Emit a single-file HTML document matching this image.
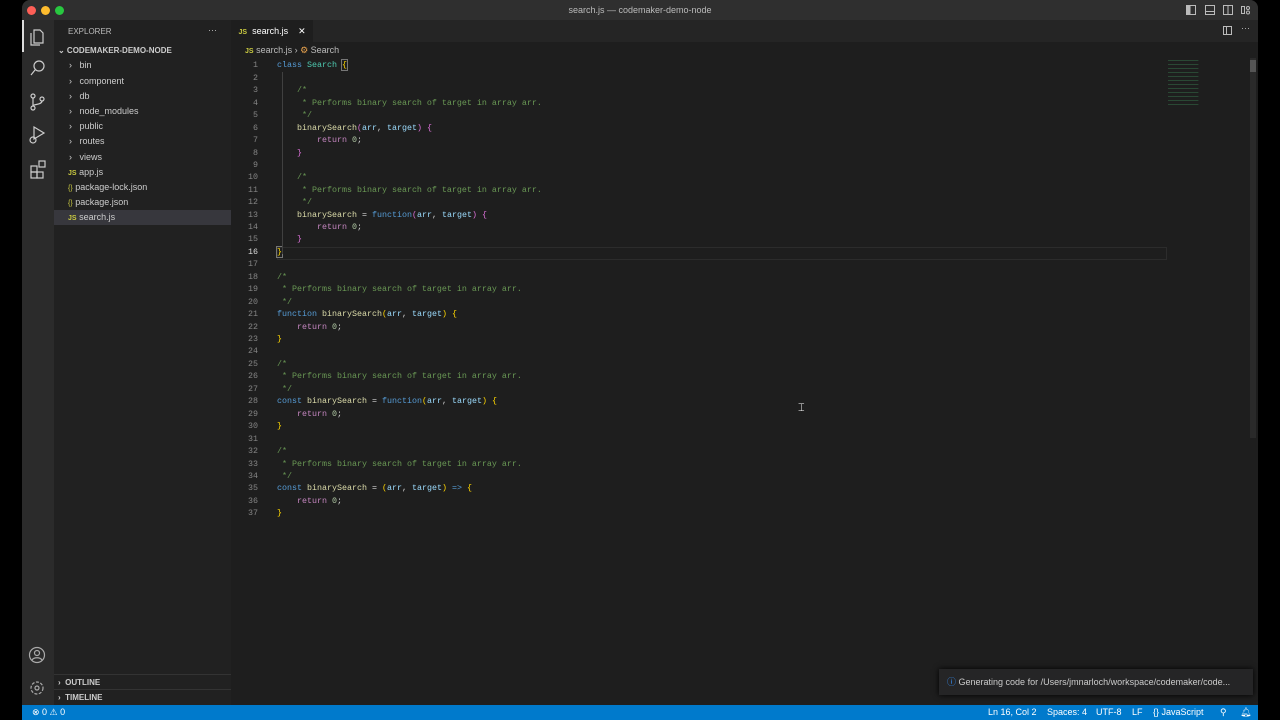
<!DOCTYPE html>
<html><head><meta charset="utf-8"><style>
*{margin:0;padding:0;box-sizing:border-box}
body{width:1280px;height:720px;background:#000;position:relative;overflow:hidden;font-family:"Liberation Sans",sans-serif;color:#ccc}
.win{position:absolute;left:22px;top:0;width:1236px;height:720px;background:#1e1e1e;border-radius:8px 8px 0 0;overflow:hidden}
.title{position:absolute;left:0;top:0;width:100%;height:20px;background:#2f2f2f;font-size:9px;color:#bbb;text-align:center;line-height:20px}
.dot{position:absolute;top:6px;width:9px;height:9px;border-radius:50%}
.act{position:absolute;left:0;top:20px;width:32px;height:685px;background:#2b2b2b}
.side{position:absolute;left:32px;top:20px;width:177px;height:685px;background:#212121}
.side .it{position:absolute;font-size:9px;color:#ccc;height:15px;line-height:15px}
.tabs{position:absolute;left:209px;top:20px;right:0;height:22px;background:#252525}
.tab{position:absolute;left:0;top:0;width:82px;height:22px;background:#1e1e1e;font-size:9px;line-height:22px;color:#fff}
.code{position:absolute;left:0;top:2px;font-family:"Liberation Mono",monospace;font-size:8.33px;white-space:pre}
.ln{position:absolute;width:30px;text-align:right;left:228px;color:#858585}
.c{position:absolute;left:277px;color:#d4d4d4}
.k{color:#569cd6}.t{color:#4ec9b0}.f{color:#dcdcaa}.p{color:#9cdcfe}.cm{color:#6a9955}.r{color:#c586c0}.n{color:#b5cea8}.y{color:#ffd700}.v{color:#da70d6}
.status{position:absolute;left:0;top:705px;width:100%;height:15px;background:#007acc;font-size:9px;color:#fff;line-height:15px}
.js{color:#cbcb41;font-size:7px;font-weight:bold}
</style></head><body>
<div class="win">
<div class="title">search.js — codemaker-demo-node
<div class="dot" style="left:5px;background:#fe5f57"></div><div class="dot" style="left:19px;background:#febc2e"></div><div class="dot" style="left:33px;background:#28c840"></div>
<svg style="position:absolute;left:1164px;top:5px" width="66" height="11" fill="none" stroke="#bbb" stroke-width="1"><rect x="0.5" y="0.5" width="9" height="9"/><rect x="1" y="1" width="3" height="8" fill="#bbb"/><rect x="19.5" y="0.5" width="9" height="9"/><line x1="20" y1="6.5" x2="28" y2="6.5"/><rect x="37.5" y="0.5" width="9" height="9"/><line x1="42" y1="1" x2="42" y2="9"/><rect x="55.5" y="1.5" width="3" height="7"/><circle cx="62" cy="3" r="1.5"/><circle cx="62" cy="7.5" r="1.5"/></svg>
</div>
<div class="act">
<div style="position:absolute;left:0;top:0;width:2px;height:32px;background:#ddd"></div>
<svg width="32" height="180" fill="none" stroke="#ccc" stroke-width="1.2" style="position:absolute;top:0;left:0">
<path d="M12 10h6l3 3v10h-9z M9 13v12h9"/>
<circle cx="17" cy="46" r="5"/><path d="M13 50l-4 5"/>
<circle cx="11" cy="76" r="2"/><circle cx="11" cy="88" r="2"/><circle cx="20" cy="79" r="2"/><path d="M11 78v8 M20 81c0 4-9 3-9 5"/>
<path d="M12 107l10 6-10 6z"/><circle cx="11" cy="120" r="3"/>
<rect x="9" y="146" width="6" height="6"/><rect x="9" y="152" width="6" height="6"/><rect x="15" y="152" width="6" height="6"/><rect x="17" y="141" width="6" height="6"/>
</svg>
<svg width="32" height="60" fill="none" stroke="#aaa" stroke-width="1.2" style="position:absolute;top:620px;left:0"><circle cx="15" cy="15" r="7.5"/><circle cx="15" cy="13" r="2.5"/><path d="M10 20c2-3 8-3 10 0"/><circle cx="15" cy="48" r="6" stroke-dasharray="3 1.5"/><circle cx="15" cy="48" r="2"/></svg>
</div>
<div class="side">
<div class="it" style="left:14px;top:4px;font-size:8px;color:#bbb">EXPLORER</div>
<div class="it" style="left:154px;top:3px;color:#bbb">···</div>
<div class="it" style="left:4px;top:23px;font-size:8px;font-weight:bold">⌄ CODEMAKER-DEMO-NODE</div>
<div class="it" style="left:15px;top:38px">›&nbsp;&nbsp; bin</div>
<div class="it" style="left:15px;top:54px">›&nbsp;&nbsp; component</div>
<div class="it" style="left:15px;top:69px">›&nbsp;&nbsp; db</div>
<div class="it" style="left:15px;top:84px">›&nbsp;&nbsp; node_modules</div>
<div class="it" style="left:15px;top:99px">›&nbsp;&nbsp; public</div>
<div class="it" style="left:15px;top:114px">›&nbsp;&nbsp; routes</div>
<div class="it" style="left:15px;top:130px">›&nbsp;&nbsp; views</div>
<div class="it" style="left:14px;top:145px"><span class="js">JS</span> app.js</div>
<div class="it" style="left:14px;top:160px"><span style="color:#cbcb41;font-size:7px">{}</span> package-lock.json</div>
<div class="it" style="left:14px;top:175px"><span style="color:#cbcb41;font-size:7px">{}</span> package.json</div>
<div class="it" style="left:0;top:190px;width:177px;background:#37373d;padding-left:14px"><span class="js">JS</span> search.js</div>
<div style="position:absolute;left:0;top:654px;width:177px;border-top:1px solid #333"></div>
<div class="it" style="left:4px;top:655px;font-size:8px;font-weight:bold">›&nbsp; OUTLINE</div>
<div style="position:absolute;left:0;top:669px;width:177px;border-top:1px solid #333"></div>
<div class="it" style="left:4px;top:670px;font-size:8px;font-weight:bold">›&nbsp; TIMELINE</div>
</div>
<div class="tabs"><div class="tab">&nbsp;&nbsp;&nbsp;<span class="js">JS</span>&nbsp; search.js&nbsp;&nbsp;&nbsp; ✕</div>
<div style="position:absolute;right:26px;top:6px;width:9px;height:9px;border:1px solid #bbb"></div><div style="position:absolute;right:31px;top:6px;height:9px;border-left:1px solid #bbb"></div>
<div style="position:absolute;right:8px;top:3px;font-size:9px;color:#bbb">···</div></div>
<div style="position:absolute;left:223px;top:45px;font-size:9px;color:#bbb"><span class="js">JS</span> search.js › <span style="color:#e8a24d">⚙</span> Search</div>
</div>
<div style="position:absolute;left:1168px;top:58px;width:38px;height:50px;opacity:.3;background:repeating-linear-gradient(#1e1e1e 0 2px,#4a6 2px 3px,#1e1e1e 3px 4px);clip-path:polygon(0 0,80% 0,80% 100%,0 100%)"></div>
<div style="position:absolute;left:1250px;top:58px;width:6px;height:380px;background:#2a2a2a"></div>
<div style="position:absolute;left:1250px;top:60px;width:6px;height:12px;background:#555"></div>
<div style="position:absolute;left:277px;top:247px;width:890px;height:13px;border:1px solid #2c2c2c"></div>
<div class="code">
<div class="ln" style="top:58px">1</div><div class="c" style="top:58px"><span class="k">class</span> <span class="t">Search</span> <span class="y" style="outline:1px solid #777">{</span></div>
<div class="ln" style="top:71px">2</div>
<div class="ln" style="top:83px">3</div><div class="c cm" style="top:83px">    /*</div>
<div class="ln" style="top:96px">4</div><div class="c cm" style="top:96px">     * Performs binary search of target in array arr.</div>
<div class="ln" style="top:108px">5</div><div class="c cm" style="top:108px">     */</div>
<div class="ln" style="top:121px">6</div><div class="c" style="top:121px">    <span class="f">binarySearch</span><span class="v">(</span><span class="p">arr</span>, <span class="p">target</span><span class="v">)</span> <span class="v">{</span></div>
<div class="ln" style="top:133px">7</div><div class="c" style="top:133px">        <span class="r">return</span> <span class="n">0</span>;</div>
<div class="ln" style="top:146px">8</div><div class="c" style="top:146px">    <span class="v">}</span></div>
<div class="ln" style="top:158px">9</div>
<div class="ln" style="top:170px">10</div><div class="c cm" style="top:170px">    /*</div>
<div class="ln" style="top:183px">11</div><div class="c cm" style="top:183px">     * Performs binary search of target in array arr.</div>
<div class="ln" style="top:195px">12</div><div class="c cm" style="top:195px">     */</div>
<div class="ln" style="top:208px">13</div><div class="c" style="top:208px">    <span class="f">binarySearch</span> = <span class="k">function</span><span class="v">(</span><span class="p">arr</span>, <span class="p">target</span><span class="v">)</span> <span class="v">{</span></div>
<div class="ln" style="top:220px">14</div><div class="c" style="top:220px">        <span class="r">return</span> <span class="n">0</span>;</div>
<div class="ln" style="top:232px">15</div><div class="c" style="top:232px">    <span class="v">}</span></div>
<div class="ln" style="top:245px;color:#ddd">16</div><div class="c" style="top:245px"><span class="y" style="outline:1px solid #777">}</span></div>
<div class="ln" style="top:257px">17</div>
<div class="ln" style="top:270px">18</div><div class="c cm" style="top:270px">/*</div>
<div class="ln" style="top:282px">19</div><div class="c cm" style="top:282px"> * Performs binary search of target in array arr.</div>
<div class="ln" style="top:295px">20</div><div class="c cm" style="top:295px"> */</div>
<div class="ln" style="top:307px">21</div><div class="c" style="top:307px"><span class="k">function</span> <span class="f">binarySearch</span><span class="y">(</span><span class="p">arr</span>, <span class="p">target</span><span class="y">)</span> <span class="y">{</span></div>
<div class="ln" style="top:320px">22</div><div class="c" style="top:320px">    <span class="r">return</span> <span class="n">0</span>;</div>
<div class="ln" style="top:332px">23</div><div class="c" style="top:332px"><span class="y">}</span></div>
<div class="ln" style="top:344px">24</div>
<div class="ln" style="top:357px">25</div><div class="c cm" style="top:357px">/*</div>
<div class="ln" style="top:369px">26</div><div class="c cm" style="top:369px"> * Performs binary search of target in array arr.</div>
<div class="ln" style="top:382px">27</div><div class="c cm" style="top:382px"> */</div>
<div class="ln" style="top:394px">28</div><div class="c" style="top:394px"><span class="k">const</span> <span class="f">binarySearch</span> = <span class="k">function</span><span class="y">(</span><span class="p">arr</span>, <span class="p">target</span><span class="y">)</span> <span class="y">{</span></div>
<div class="ln" style="top:407px">29</div><div class="c" style="top:407px">    <span class="r">return</span> <span class="n">0</span>;</div>
<div class="ln" style="top:419px">30</div><div class="c" style="top:419px"><span class="y">}</span></div>
<div class="ln" style="top:432px">31</div>
<div class="ln" style="top:444px">32</div><div class="c cm" style="top:444px">/*</div>
<div class="ln" style="top:457px">33</div><div class="c cm" style="top:457px"> * Performs binary search of target in array arr.</div>
<div class="ln" style="top:469px">34</div><div class="c cm" style="top:469px"> */</div>
<div class="ln" style="top:481px">35</div><div class="c" style="top:481px"><span class="k">const</span> <span class="f">binarySearch</span> = <span class="y">(</span><span class="p">arr</span>, <span class="p">target</span><span class="y">)</span> <span class="k">=&gt;</span> <span class="y">{</span></div>
<div class="ln" style="top:494px">36</div><div class="c" style="top:494px">    <span class="r">return</span> <span class="n">0</span>;</div>
<div class="ln" style="top:506px">37</div><div class="c" style="top:506px"><span class="y">}</span></div>
</div>
<div style="position:absolute;left:282px;top:72px;height:182px;border-left:1px solid #404040"></div>
<div style="position:absolute;left:798px;top:402px;font-size:11px;color:#fff">⌶</div>
<div style="position:absolute;left:939px;top:669px;width:314px;height:26px;background:#252526;box-shadow:0 0 6px #000;font-size:9px;color:#ccc;line-height:26px;padding-left:8px"><span style="color:#3794ff">ⓘ</span> Generating code for /Users/jmnarloch/workspace/codemaker/code...</div>
<div class="status" style="left:22px;width:1236px">
<span style="position:absolute;left:10px">⊗ 0 ⚠ 0</span>
<span style="position:absolute;left:966px">Ln 16, Col 2</span>
<span style="position:absolute;left:1025px">Spaces: 4</span>
<span style="position:absolute;left:1074px">UTF-8</span>
<span style="position:absolute;left:1110px">LF</span>
<span style="position:absolute;left:1131px">{} JavaScript</span>
<span style="position:absolute;left:1198px">⚲</span>
<span style="position:absolute;left:1218px">🔔︎</span>
</div>
</body></html>
